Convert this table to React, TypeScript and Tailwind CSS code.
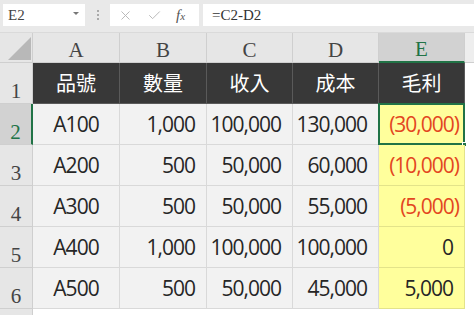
import { X, Check } from "lucide-react";

type Cell = { v: string; neg?: boolean };

const cols = ["A", "B", "C", "D", "E"];
const heads = ["品號", "數量", "收入", "成本", "毛利"];

const rows: Cell[][] = [
  [{ v: "A100" }, { v: "1,000" }, { v: "100,000" }, { v: "130,000" }, { v: "(30,000)", neg: true }],
  [{ v: "A200" }, { v: "500" }, { v: "50,000" }, { v: "60,000" }, { v: "(10,000)", neg: true }],
  [{ v: "A300" }, { v: "500" }, { v: "50,000" }, { v: "55,000" }, { v: "(5,000)", neg: true }],
  [{ v: "A400" }, { v: "1,000" }, { v: "100,000" }, { v: "100,000" }, { v: "0" }],
  [{ v: "A500" }, { v: "500" }, { v: "50,000" }, { v: "45,000" }, { v: "5,000" }],
];

const grid = "grid grid-cols-[33px_87px_87px_86px_86px_86px_1fr]";

function FormulaBar() {
  return (
    <div className="flex h-[33px] items-start gap-0 bg-[#e9e9e9] pl-[3px] pt-[4px] border-b border-[#dadada]">
      <div className="relative flex h-[22px] w-[82px] items-center bg-white pl-[5px] font-['Liberation_Serif',serif] text-[15px] text-[#444]">
        E2
        <span className="absolute right-[6px] top-[8px] h-0 w-0 border-x-[3px] border-t-[3px] border-x-transparent border-t-[#777]" />
      </div>
      <div className="flex h-[22px] w-[25px] flex-col items-center justify-center gap-[2px]">
        <span className="h-[2px] w-[2px] bg-[#aaa]" />
        <span className="h-[2px] w-[2px] bg-[#aaa]" />
        <span className="h-[2px] w-[2px] bg-[#aaa]" />
      </div>
      <div className="flex h-[22px] w-[89px] items-center bg-white text-[#b5b5b5]">
        <X size={15} strokeWidth={1.5} className="ml-[8px]" />
        <Check size={15} strokeWidth={1.5} className="ml-[14px]" />
        <span className="ml-[14px] font-['Liberation_Serif',serif] text-[15px] italic text-[#555]">
          f<span className="text-[11px]">x</span>
        </span>
      </div>
      <div className="ml-[4px] flex h-[22px] flex-1 items-center bg-white pl-[9px] font-['Liberation_Serif',serif] text-[15px] text-[#333]">
        =C2-D2
      </div>
    </div>
  );
}

function App() {
  return (
    <div className="h-[315px] w-[474px] overflow-hidden bg-white">
      <FormulaBar />

      {/* column letters */}
      <div className={`${grid} h-[30px] bg-[#e6e6e6] font-['Liberation_Serif',serif] text-[21px] leading-[24px] text-[#444]`}>
        <div className="relative border-r border-b border-[#cfcfcf]">
          <svg width="33" height="29" className="absolute left-0 top-0">
            <polygon points="8,27 31,4 31,27" fill="#b8b8b8" />
          </svg>
        </div>
        {cols.map((c) => (
          <div
            key={c}
            className={
              c === "E"
                ? "flex items-end justify-center border-r border-b-2 border-r-[#cfcfcf] border-b-[#217346] bg-[#d2d2d2] text-[#217346]"
                : "flex items-end justify-center border-r border-b border-[#cfcfcf]"
            }
          >
            {c}
          </div>
        ))}
        <div className="border-b border-[#cfcfcf] bg-[#eeeeee]" />
      </div>

      {/* row 1: dark headers */}
      <div className={`${grid} h-[41px]`}>
        <div className="flex items-end justify-center border-r border-b border-[#cfcfcf] bg-[#e6e6e6] font-['Liberation_Serif',serif] text-[21px] leading-[24px] text-[#444]">
          1
        </div>
        {heads.map((h) => (
          <div
            key={h}
            className="flex items-center justify-center border-r border-b border-[#5a5a5a] bg-[#383838] font-['Noto_Sans_CJK_TC','Noto_Sans_CJK_SC',sans-serif] text-[20px] text-white"
          >
            {h}
          </div>
        ))}
        <div className="bg-white" />
      </div>

      {rows.map((r, i) => {
        const sel = i === 0;
        return (
          <div key={i} className={`${grid} h-[41px]`}>
            <div
              className={
                sel
                  ? "flex items-end justify-center border-r-2 border-b border-r-[#217346] border-b-[#cfcfcf] bg-[#d2d2d2] font-['Liberation_Serif',serif] text-[21px] leading-[24px] text-[#217346]"
                  : "flex items-end justify-center border-r border-b border-[#cfcfcf] bg-[#e6e6e6] font-['Liberation_Serif',serif] text-[21px] leading-[24px] text-[#444]"
              }
            >
              {i + 2}
            </div>
            {r.map((c, j) => {
              const isE = j === 4;
              const base =
                "relative flex items-end pb-[6px] font-['Open_Sans','Noto_Sans',sans-serif] text-[21px] leading-[28px] tracking-[-1px] border-r border-b";
              const align = j === 0 ? "justify-center" : c.neg ? "justify-end pr-[5px]" : "justify-end pr-[11px]";
              const bg = isE ? "bg-[#ffff9c] border-[#e3e38a]" : "bg-[#f2f2f2] border-[#d9d9d9]";
              const color = c.neg ? "text-[#e3461f]" : "text-[#262626]";
              return (
                <div key={j} className={`${base} ${align} ${bg} ${color}`}>
                  {c.v}
                  {isE && sel && (
                    <>
                      <span className="absolute -left-px -top-px -right-px -bottom-px border-2 border-[#217346]" />
                      <span className="absolute -bottom-[3px] -right-[3px] h-[5px] w-[5px] border border-white bg-[#217346]" />
                    </>
                  )}
                </div>
              );
            })}
            <div className="bg-white" />
          </div>
        );
      })}

      <div className={`${grid} h-[6px]`}>
        <div className="border-r border-[#cfcfcf] bg-[#e6e6e6]" />
      </div>
    </div>
  );
}

export default App;
